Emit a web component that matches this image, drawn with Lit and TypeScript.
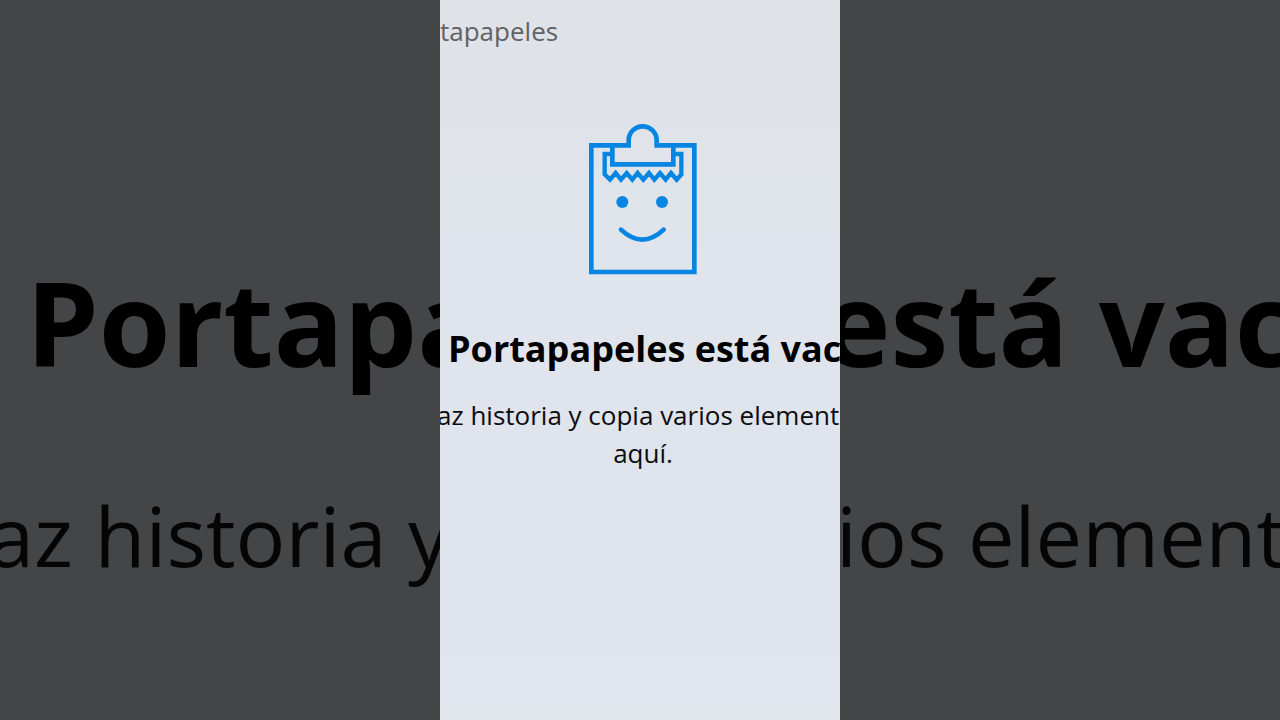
import { LitElement, html, css } from "lit";
import { customElement } from "lit/decorators.js";

@customElement("clipboard-icon")
export class ClipboardIcon extends LitElement {
  static styles = css`
    :host { display: block; }
    .icon { display: block; width: 110px; height: 154px; }
    .line { fill: none; stroke: #0686e2; stroke-width: 14; }
    .torn { stroke-width: 13; }
    .smile { stroke-linecap: round; }
    .eye { fill: #0686e2; }
  `;

  render() {
    return html`
      <svg class="icon" viewBox="54 36 330 462" aria-hidden="true">
        <path class="line" d="M64 106H176V91a42 42 0 0 1 84 0V106H373V486H64Z" />
        <path class="line" d="M127 106V163H310V106" />
        <path
          class="line torn"
          d="M127 132H104V193L120 209L137 189L153 209L170 189L187 209L203 189L220 209L237 189L253 209L270 189L287 209L303 189L320 209L334 193V132H310"
        />
        <circle class="eye" cx="157" cy="276" r="18" />
        <circle class="eye" cx="276" cy="276" r="18" />
        <path class="line smile" d="M153 359Q217 419 281 359" />
      </svg>
    `;
  }
}

@customElement("app-root")
export class AppRoot extends LitElement {
  static styles = css`
    :host {
      display: grid;
      grid-template-columns: minmax(0, 1fr) auto minmax(0, 1fr);
      min-height: 100vh;
      background: #444546;
      color: #000;
      font-family: "Open Sans", "Noto Sans", sans-serif;
      white-space: nowrap;
    }
    .side {
      display: flex;
      flex-direction: column;
      gap: 76px;
      padding-top: 245px;
      overflow: hidden;
    }
    .big-title {
      font-size: 116px;
      font-weight: 700;
      line-height: 154px;
    }
    .big-text {
      font-size: 83px;
      line-height: 120px;
      color: #050506;
    }
    .start .big-title { margin-left: 26px; }
    .start .big-text { margin-left: -12px; }
    .end .big-title { margin-left: -18px; }
    .end .big-text { margin-left: -4px; }
    .panel {
      display: flex;
      flex-direction: column;
      box-sizing: border-box;
      height: 100vh;
      aspect-ratio: 5 / 9;
      padding-top: 12px;
      overflow: hidden;
      background: linear-gradient(#dfe3e8, #e0e4ec 45%, #dfe3eb 80%, #e1e5ec);
    }
    .label {
      margin: 0;
      font-size: 26px;
      line-height: 38px;
      color: #5f6265;
    }
    .icon {
      align-self: center;
      padding: 72px 0 49px 6px;
    }
    .title {
      margin: 0;
      padding-left: 8px;
      font-size: 36px;
      font-weight: 700;
      line-height: 48px;
    }
    .text {
      display: flex;
      flex-direction: column;
      margin: 0;
      padding-top: 23px;
      font-size: 26px;
      line-height: 38px;
      color: #0b0c0e;
    }
    .first { margin-left: -3px; }
    .last {
      padding-left: 6px;
      text-align: center;
    }
  `;

  render() {
    return html`
      <div class="side start">
        <div class="big-title">Portapa</div>
        <div class="big-text">az historia y</div>
      </div>
      <main class="panel">
        <p class="label">tapapeles</p>
        <clipboard-icon class="icon"></clipboard-icon>
        <h1 class="title">Portapapeles está vac</h1>
        <p class="text">
          <span class="first">az historia y copia varios element</span>
          <span class="last">aquí.</span>
        </p>
      </main>
      <div class="side end">
        <div class="big-title">está vac</div>
        <div class="big-text">ios element</div>
      </div>
    `;
  }
}
